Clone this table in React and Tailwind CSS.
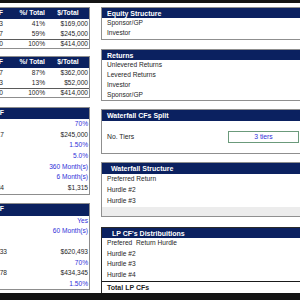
const FONT = "font-['Liberation_Sans',Arial,sans-serif]";
const NAVY = 'bg-[#0b2160]';
const BLUE = 'text-[#2f2fd8]';

function SplitTable({ head, rows, total, className = '' }) {
  return (
    <div className={`ml-[-40px] w-[130px] shrink-0 border border-[#8d8d8d] ${className}`}>
      <div className={`grid grid-cols-[44px_42px_1fr] h-[11px] items-center ${NAVY} text-white font-bold text-[6.8px] leading-none`}>
        <span className="text-right pr-[2px] whitespace-nowrap">{head}</span>
        <span className="text-right pr-[2px] whitespace-nowrap">%/ Total</span>
        <span className="text-center whitespace-nowrap">$/Total</span>
      </div>
      {rows.map((r, i) => (
        <div key={i} className="grid grid-cols-[44px_42px_1fr] h-[10px] items-center text-[6.6px] leading-none">
          <span className="text-right pr-[2px] whitespace-nowrap">{r[0]}</span>
          <span className="text-right pr-[2px]">{r[1]}</span>
          <span className="text-right pr-[1px]">{r[2]}</span>
        </div>
      ))}
      <div className="grid grid-cols-[44px_42px_1fr] h-[9px] items-center text-[6.6px] leading-none border-t border-[#5a5a5a]">
        <span className="text-right pr-[2px] whitespace-nowrap">{total[0]}</span>
        <span className="text-right pr-[2px]">{total[1]}</span>
        <span className="text-right pr-[1px]">{total[2]}</span>
      </div>
    </div>
  );
}

function InputTable({ head, rows, headH, rowH, cols, headPad = 'pr-[1px]', className = '' }) {
  return (
    <div className={`ml-[-40px] w-[130px] shrink-0 border border-[#8d8d8d] ${className}`}>
      <div className={`grid ${cols} ${headH} items-center ${NAVY} text-white font-bold text-[6.8px] leading-none`}>
        <span className={`text-right ${headPad} whitespace-nowrap`}>{head}</span>
        <span />
      </div>
      {rows.map((r, i) => (
        <div key={i} className={`grid ${cols} ${rowH} items-center text-[6.6px] leading-none`}>
          <span className="text-right pr-[1px] whitespace-nowrap">{r[0]}</span>
          <span className={`text-right pr-[1px] whitespace-nowrap ${r[2] ? BLUE : ''}`}>{r[1]}</span>
        </div>
      ))}
    </div>
  );
}

function Box({ title, titlePad = 'pl-[5px]', headH = 'h-[10px]', dark = false, className = '', children }) {
  return (
    <div className={`w-[230px] shrink-0 border ${dark ? 'border-[#2a2a2a]' : 'border-[#8f8f8f]'} ${className}`}>
      <div className={`${headH} flex items-center ${titlePad} ${NAVY} text-white font-bold text-[7px] leading-none whitespace-nowrap`}>
        {title}
      </div>
      {children}
    </div>
  );
}

function Row({ h = 'h-[10px]', bold = false, children }) {
  return (
    <div className={`${h} flex items-center pl-[5px] text-[6.6px] leading-none whitespace-nowrap ${bold ? 'font-bold text-[7px]' : ''}`}>
      {children}
    </div>
  );
}

export default function App() {
  return (
    <div className={`${FONT} w-[300px] h-[300px] bg-white flex flex-col overflow-hidden text-[#1e1e1e]`}>
      <div className="h-[3px] bg-[#141414] shrink-0" />
      <div className="flex-1 flex overflow-hidden">
        {/* left column: tables cut off at the window's left edge */}
        <div className="w-[90px] shrink-0 overflow-hidden flex flex-col">
          <SplitTable
            className="mt-[4px]"
            head="Monthly CF"
            rows={[
              ['$14,083', '41%', '$169,000'],
              ['$20,417', '59%', '$245,000'],
            ]}
            total={['$34,500', '100%', '$414,000']}
          />
          <SplitTable
            className="mt-[7px]"
            head="Monthly CF"
            rows={[
              ['$30,167', '87%', '$362,000'],
              ['$4,333', '13%', '$52,000'],
            ]}
            total={['$34,500', '100%', '$414,000']}
          />
          <InputTable
            className="mt-[9px]"
            head="Loan CF"
            cols="grid-cols-[44px_1fr]"
            headH="h-[11px]"
            rowH="h-[10.67px]"
            rows={[
              ['', '70%', true],
              ['$20,417', '$245,000'],
              ['', '1.50%', true],
              ['', '5.0%', true],
              ['', '360 Month(s)', true],
              ['', '6 Month(s)', true],
              ['$15,784', '$1,315'],
            ]}
          />
          <InputTable
            className="mt-[8px]"
            head="Sale CF"
            headPad="pr-[4px]"
            cols="grid-cols-[47px_1fr]"
            headH="h-[12px]"
            rowH="h-[10.5px]"
            rows={[
              ['', 'Yes', true],
              ['', '60 Month(s)', true],
              ['', ''],
              ['$12,233', '$620,493'],
              ['', '70%', true],
              ['$36,178', '$434,345'],
              ['', '1.50%', true],
            ]}
          />
        </div>

        {/* right column */}
        <div className="ml-[11px] flex-1 flex flex-col">
          <Box title="Equity Structure" className="mt-[4px]">
            <Row h="h-[10.5px]">Sponsor/GP</Row>
            <Row h="h-[10.5px]">Investor</Row>
          </Box>
          <Box title="Returns" className="mt-[9px]">
            <Row>Unlevered Returns</Row>
            <Row>Levered Returns</Row>
            <Row>Investor</Row>
            <Row>Sponsor/GP</Row>
          </Box>
          <Box title="Waterfall CFs Split" headH="h-[11px]" className="mt-[8px]">
            <div className="h-[32px] flex items-center">
              <div className="w-[126px] pl-[5px] text-[6.8px] leading-none">No. Tiers</div>
              <div className={`w-[71px] h-[12px] border border-[#6b9a7b] flex items-center justify-center text-[6.8px] leading-none ${BLUE}`}>
                3 tiers
              </div>
            </div>
          </Box>
          <Box title="Waterfall Structure" titlePad="pl-[9px]" headH="h-[11px]" className="mt-[8px]">
            <Row h="h-[11px]">Preferred Return</Row>
            <Row h="h-[11px]">Hurdle #2</Row>
            <Row h="h-[11px]">Hurdle #3</Row>
            <div className="h-[9px] bg-[#ececec]" />
          </Box>
          <Box title="LP CF's Distribuitions" titlePad="pl-[10px]" dark className="mt-[10px]">
            <Row h="h-[10.67px]">Prefered&nbsp;&nbsp;Return Hurdle</Row>
            <Row h="h-[10.67px]">Hurdle #2</Row>
            <Row h="h-[10.67px]">Hurdle #3</Row>
            <Row h="h-[10.67px]">Hurdle #4</Row>
            <div className="border-t border-[#1a1a1a]">
              <Row h="h-[11px]" bold>Total LP CFs</Row>
            </div>
          </Box>
        </div>
      </div>
      <div className="h-[7px] bg-[#141414] shrink-0" />
    </div>
  );
}
